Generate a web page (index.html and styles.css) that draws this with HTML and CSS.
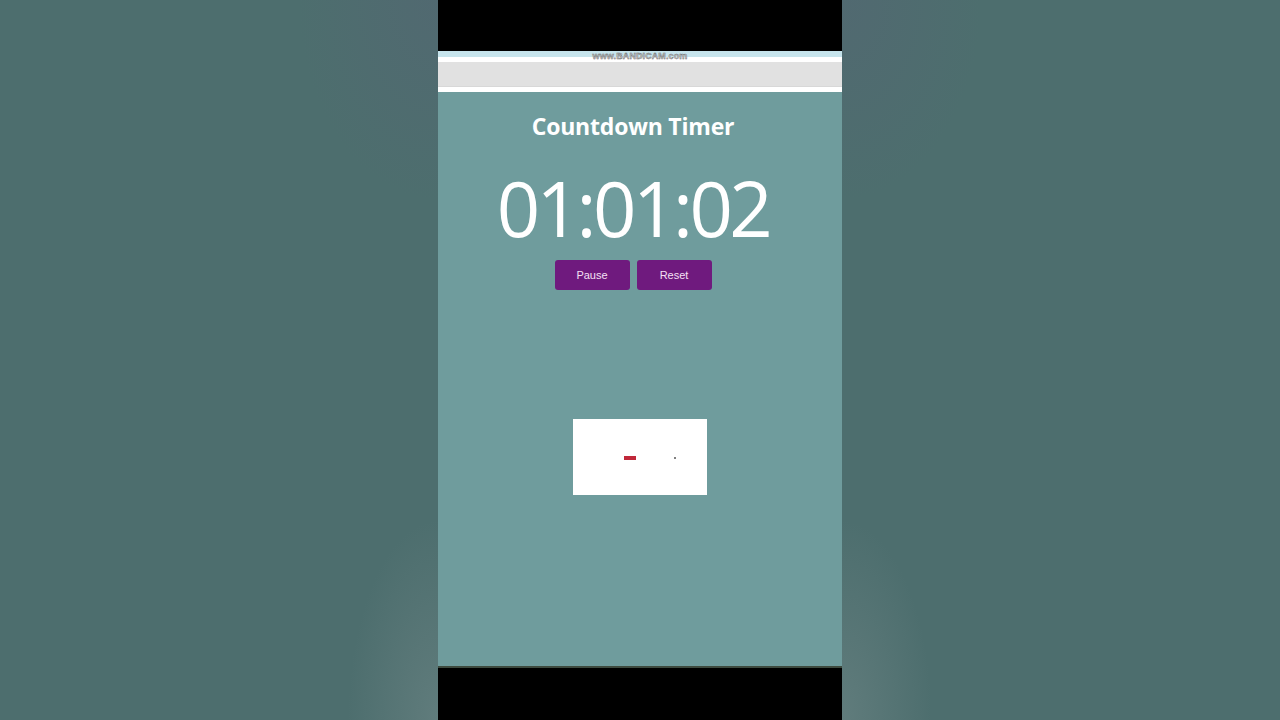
FILE: index.html
```html
<!DOCTYPE html>
<html>
<head>
<meta charset="utf-8">
<link rel="stylesheet" href="styles.css">
</head>
<body>
<div class="stage">
  <div class="side side-left"></div>
  <div class="phone">
    <div class="bar-black-top"></div>
    <div class="bar-blue"><span class="watermark">www.BANDICAM.com</span></div>
    <div class="bar-white"></div>
    <div class="bar-grey"></div>
    <div class="bar-white"></div>
    <div class="screen">
      <div class="content">
        <h1 class="title">Countdown Timer</h1>
        <div class="timer">01:01:02</div>
        <div class="buttons">
          <button class="btn">Pause</button>
          <button class="btn">Reset</button>
        </div>
      </div>
      <div class="ad">
        <span class="ad-red"></span>
        <span class="ad-dot"></span>
      </div>
    </div>
    <div class="bar-line"></div>
    <div class="bar-black-bottom"></div>
  </div>
  <div class="side side-right"></div>
</div>
</body>
</html>
```
FILE: styles.css
```css
html, body {
  margin: 0;
  padding: 0;
  width: 1280px;
  height: 720px;
  overflow: hidden;
  background: #4e6e6e;
}
.stage {
  display: flex;
  width: 1280px;
  height: 720px;
}
.side {
  flex: 1;
  height: 720px;
}
.side-left {
  background:
    radial-gradient(ellipse 90px 200px at 100% 100%, rgba(125,145,145,0.4), rgba(125,145,145,0) 100%),
    radial-gradient(ellipse 140px 200px at 100% 0%, rgba(85,100,115,0.5), rgba(85,100,115,0) 100%),
    #4d6e6e;
}
.side-right {
  background:
    radial-gradient(ellipse 90px 200px at 0% 100%, rgba(125,145,145,0.4), rgba(125,145,145,0) 100%),
    radial-gradient(ellipse 140px 200px at 0% 0%, rgba(85,100,115,0.5), rgba(85,100,115,0) 100%),
    #4d6e6e;
}
.phone {
  width: 404px;
  height: 720px;
  display: flex;
  flex-direction: column;
}
.bar-black-top {
  height: 51px;
  background: #000;
}
.bar-blue {
  height: 6px;
  background: #c6e4ec;
  display: flex;
  justify-content: center;
  align-items: flex-start;
  overflow: visible;
  position: relative;
  z-index: 1;
}
.watermark {
  font-family: "Liberation Sans", Arial, sans-serif;
  font-size: 9px;
  font-weight: 700;
  line-height: 9px;
  margin-top: 1px;
  color: #c8c8c8;
  letter-spacing: 0.1px;
  -webkit-text-stroke: 0.4px #6a6a6a;
}
.bar-white {
  height: 5px;
  background: #ffffff;
}
.bar-grey {
  height: 24px;
  background: #e1e1e1;
  border-bottom: 1px solid #d8d8d8;
}
.screen {
  flex: 1;
  background: #6f9c9d;
  display: flex;
  flex-direction: column;
  align-items: center;
}
.content {
  width: 100%;
  box-sizing: border-box;
  padding-right: 14px;
  display: flex;
  flex-direction: column;
  align-items: center;
}
.title {
  margin: 19px 0 0 0;
  font-family: "Open Sans", "Noto Sans", sans-serif;
  font-weight: 700;
  font-size: 23px;
  line-height: 30px;
  letter-spacing: -0.2px;
  color: #ffffff;
}
.timer {
  margin-top: 29px;
  font-family: "Open Sans", "Noto Sans", sans-serif;
  font-weight: 400;
  font-size: 76px;
  line-height: 76px;
  letter-spacing: -3.5px;
  color: #ffffff;
}
.buttons {
  margin-top: 14px;
  display: flex;
  gap: 7px;
}
.btn {
  width: 75px;
  height: 30px;
  border: none;
  border-radius: 3px;
  background: #6f1a7e;
  color: #f4e0f4;
  font-family: "Liberation Sans", Arial, sans-serif;
  font-size: 11px;
  padding: 0;
}
.ad {
  margin-top: 129px;
  width: 134px;
  height: 76px;
  background: #ffffff;
  position: relative;
}
.ad-red {
  position: absolute;
  left: 51px;
  top: 37px;
  width: 12px;
  height: 4px;
  background: #c0283a;
}
.ad-dot {
  position: absolute;
  left: 101px;
  top: 38px;
  width: 2px;
  height: 2px;
  background: #808080;
}
.bar-line {
  height: 2px;
  background: #3d4a3e;
}
.bar-black-bottom {
  height: 52px;
  background: #000;
}
```
